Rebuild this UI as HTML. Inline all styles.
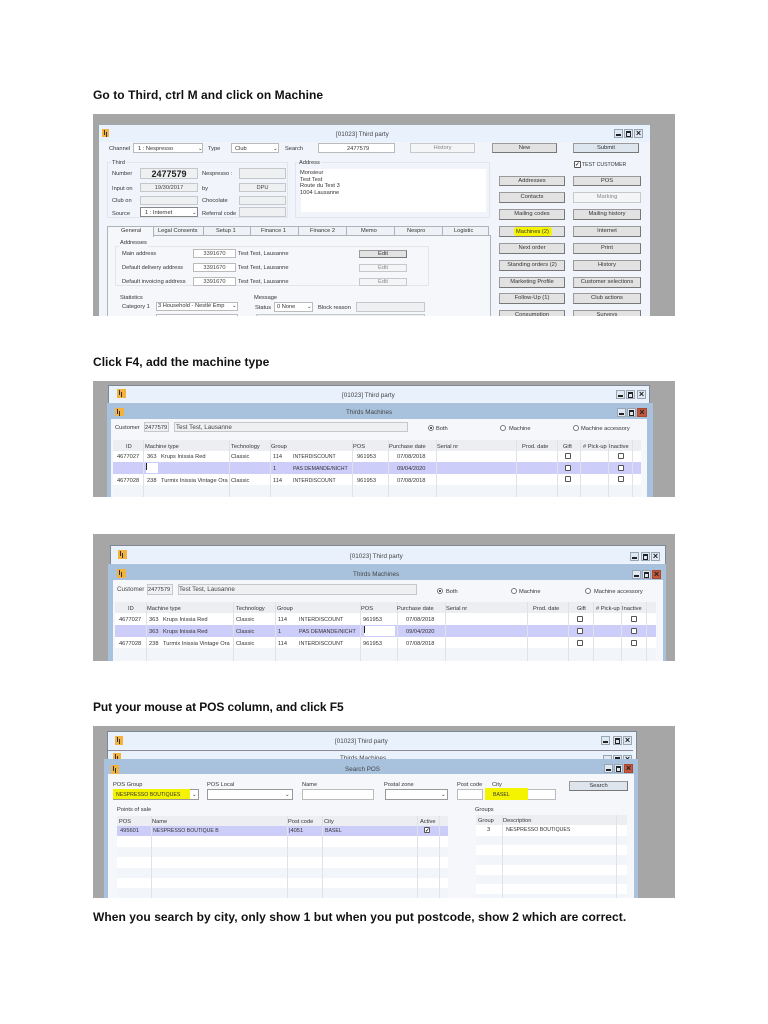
<!DOCTYPE html>
<html><head><meta charset="utf-8"><title>Third party</title>
<style>
html,body{margin:0;padding:0;background:#fff}
body{position:relative;width:768px;height:1024px;overflow:hidden;font-family:"Liberation Sans",sans-serif}
.h{position:absolute;left:93px;font-size:12px;line-height:16px;font-weight:bold;color:#111;white-space:nowrap}
.s{position:absolute;left:93px;width:582px;background:#a6a6a6;overflow:hidden;filter:blur(.35px)}
.s div{position:absolute;box-sizing:border-box}
.w{background:#f1f5fb;border:1px solid #7d8894}
.tb{background:#e9f1fc}
.bl{background:#a8c2de}
.c{background:#f5f7fa}
.t{font-size:5.7px;line-height:8px;color:#333;white-space:nowrap;margin-top:1px}
.cp{font-size:5.2px}
.tt{font-size:6.3px;line-height:8px;color:#444;white-space:nowrap;margin-top:1px}
.i{background:#fff;border:1px solid #bbb}
.g{background:#eef0f2;border:1px solid #c4c8cc}
.btn{background:#e2e2e2;border:1px solid #9a9a9a;border-right-color:#777;border-bottom-color:#777;font-size:5.8px;line-height:9px;color:#333;text-align:center;white-space:nowrap}
.lt{background:#f4f5f6;border-color:#c6c8ca;color:#888}
.fs{border:1px solid #e2e5e9}
.ic{background:#f4b23e;width:7px;height:8px}
.ic:after{content:"";position:absolute;left:2px;top:1px;width:1px;height:5px;background:#333;box-shadow:2px 2px 0 #333}
.wb{background:#dfe8f3;border:1px solid #9aa5b2;width:9px;height:9px}
.wb:after{content:"";position:absolute;background:#222}
.mn:after{left:1px;top:4px;width:5px;height:2px}
.mx:after{left:1px;top:1px;width:3px;height:3px;background:transparent;border:1px solid #222;border-top-width:2px}
.cl{color:#222;font-size:9px;line-height:7px;font-weight:bold;text-align:center}
.cl:after{display:none}
.rd{background:#c2573c;border-color:#a9482f}
.r{width:6px;height:6px;border:1px solid #777;border-radius:50%;background:#fff}
.r.on:after{content:"";position:absolute;left:1px;top:1px;width:2px;height:2px;border-radius:50%;background:#222}
.cb{width:6px;height:6px;border:1px solid #555;background:#fff;border-radius:1px}
.hd{background:#eceef1}
.wr{background:#fff}
.al{background:#f2f6fb}
.pu{background:#cdcdfa}
.v{width:1px;background:#dfe2e6}
.y{background:#f4f400}
.val{font:5.7px/8px 'Liberation Sans',sans-serif;color:#444;text-align:center;padding-top:1px}
</style></head><body>

<div class="h" style="top:87px;letter-spacing:.07px">Go to Third, ctrl M and click on Machine</div>

<div class="s" style="top:114px;height:202px">
<div class="w" style="left:5px;top:10px;width:552px;height:200px;border:0;border-left:1px solid #9aa;border-top:1px solid #9aa"></div>
<div class="tb" style="left:6px;top:11px;width:551px;height:17px"></div>
<div class="ic" style="left:9px;top:15px"></div>
<div class="tt" style="left:243px;top:16px">[01023] Third party</div>
<div class="wb mn" style="left:521px;top:15px"></div><div class="wb mx" style="left:531px;top:15px"></div><div class="wb cl" style="left:541px;top:15px">×</div>
<div class="t" style="left:16px;top:30px">Channel</div><div class="i" style="left:40px;top:29px;width:70px;height:10px"></div><div class="t" style="left:45px;top:30px">1 : Nespresso</div><div class="t" style="left:105px;top:30px">⌄</div>
<div class="t" style="left:115px;top:30px">Type</div><div class="i" style="left:138px;top:29px;width:48px;height:10px"></div><div class="t" style="left:142px;top:30px">Club</div><div class="t" style="left:180px;top:30px">⌄</div>
<div class="t" style="left:192px;top:30px">Search</div><div class="i" style="left:225px;top:29px;width:77px;height:10px"></div><div class="t" style="left:254px;top:30px">2477579</div>
<div class="btn lt" style="left:317px;top:29px;width:65px;height:10px">History</div>
<div class="btn" style="left:399px;top:29px;width:65px;height:10px">New</div>
<div class="btn" style="left:480px;top:29px;width:66px;height:10px;background:#dde5ee">Submit</div>
<div class="cb" style="left:481px;top:47px;width:7px;height:7px"></div><div class="t" style="left:482px;top:46px;font-weight:bold">✓</div><div class="t cp" style="left:489px;top:46px">TEST CUSTOMER</div>

<div class="btn" style="left:406px;top:62px;width:66px;height:10px">Addresses</div><div class="btn" style="left:480px;top:62px;width:68px;height:10px">POS</div>
<div class="btn" style="left:406px;top:78px;width:66px;height:11px">Contacts</div><div class="btn lt" style="left:480px;top:78px;width:68px;height:11px">Marking</div>
<div class="btn" style="left:406px;top:95px;width:66px;height:11px">Mailing codes</div><div class="btn" style="left:480px;top:95px;width:68px;height:11px">Mailing history</div>
<div class="btn" style="left:406px;top:112px;width:66px;height:11px"></div><div class="y" style="left:421px;top:113px;width:38px;height:9px;border-radius:3px"></div><div class="t" style="left:423px;top:113px">Machines (2)</div><div class="btn" style="left:480px;top:112px;width:68px;height:11px">Internet</div>
<div class="btn" style="left:406px;top:129px;width:66px;height:11px">Next order</div><div class="btn" style="left:480px;top:129px;width:68px;height:11px">Print</div>
<div class="btn" style="left:406px;top:146px;width:66px;height:11px">Standing orders (2)</div><div class="btn" style="left:480px;top:146px;width:68px;height:11px">History</div>
<div class="btn" style="left:406px;top:163px;width:66px;height:11px">Marketing Profile</div><div class="btn" style="left:480px;top:163px;width:68px;height:11px">Customer selections</div>
<div class="btn" style="left:406px;top:179px;width:66px;height:11px">Follow-Up (1)</div><div class="btn" style="left:480px;top:179px;width:68px;height:11px">Club actions</div>
<div class="btn" style="left:406px;top:196px;width:66px;height:11px">Consumption</div><div class="btn" style="left:480px;top:196px;width:68px;height:11px">Surveys</div>

<div class="fs" style="left:14px;top:48px;width:181px;height:56px"></div>
<div class="t" style="left:18px;top:44px;background:#f1f5fb;padding:0 1px">Third</div>
<div class="t" style="left:19px;top:55px">Number</div><div class="g" style="left:47px;top:54px;width:58px;height:11px;text-align:center;font:bold 9px/10px 'Liberation Sans',sans-serif;color:#222">2477579</div>
<div class="t" style="left:109px;top:55px">Nespresso :</div><div class="g" style="left:146px;top:54px;width:47px;height:11px"></div>
<div class="t" style="left:19px;top:70px">Input on</div><div class="g val" style="left:47px;top:69px;width:58px;height:9px;padding-top:0">19/30/2017</div>
<div class="t" style="left:109px;top:70px">by</div><div class="g val" style="left:146px;top:69px;width:47px;height:9px;padding-top:0">DPU</div>
<div class="t" style="left:19px;top:82px">Club on</div><div class="g" style="left:47px;top:82px;width:58px;height:9px"></div>
<div class="t" style="left:109px;top:82px">Chocolate</div><div class="g" style="left:146px;top:82px;width:47px;height:9px"></div>
<div class="t" style="left:19px;top:95px">Source</div><div class="i" style="left:47px;top:93px;width:58px;height:10px;border-color:#888"></div><div class="t" style="left:52px;top:94px">1 : Internet</div><div class="t" style="left:99px;top:94px">⌄</div>
<div class="t" style="left:109px;top:95px">Referral code</div><div class="g" style="left:146px;top:93px;width:47px;height:10px"></div>

<div class="fs" style="left:202px;top:48px;width:195px;height:56px"></div>
<div class="t" style="left:205px;top:44px;background:#f1f5fb;padding:0 1px">Address</div>
<div style="left:208px;top:55px;width:185px;height:43px;background:#fff"></div>
<div class="t" style="left:207px;top:55px;line-height:6.7px;background:transparent">Monsieur<br>Test Test<br>Route du Test 3<br>1004 Lausanne</div>

<div style="left:14px;top:121px;width:384px;height:90px;border:1px solid #aeb4ba;background:#f5f7fa"></div>
<div style="left:14px;top:112px;width:382px;height:10px;background:#eef1f5;border:1px solid #aeb4ba"></div>
<div style="left:14px;top:112px;width:47px;height:11px;background:#f5f7fa;border:1px solid #aeb4ba;border-bottom:0"></div>
<div class="v" style="left:110px;top:112px;height:9px;background:#aeb4ba"></div><div class="v" style="left:157px;top:112px;height:9px;background:#aeb4ba"></div><div class="v" style="left:205px;top:112px;height:9px;background:#aeb4ba"></div><div class="v" style="left:253px;top:112px;height:9px;background:#aeb4ba"></div><div class="v" style="left:301px;top:112px;height:9px;background:#aeb4ba"></div><div class="v" style="left:349px;top:112px;height:9px;background:#aeb4ba"></div>
<div class="t" style="left:28px;top:112px">General</div><div class="t" style="left:65px;top:112px">Legal Consents</div><div class="t" style="left:123px;top:112px">Setup 1</div><div class="t" style="left:168px;top:112px">Finance 1</div><div class="t" style="left:217px;top:112px">Finance 2</div><div class="t" style="left:268px;top:112px">Memo</div><div class="t" style="left:314px;top:112px">Nespro</div><div class="t" style="left:361px;top:112px">Logistic</div>

<div class="fs" style="left:22px;top:132px;width:314px;height:40px"></div>
<div class="t" style="left:26px;top:124px;background:#f5f7fa;padding:0 1px">Addresses</div>
<div class="t" style="left:29px;top:135px">Main address</div><div class="i val" style="left:100px;top:135px;width:43px;height:9px;padding-top:0">3391670</div><div class="t" style="left:145px;top:135px">Test Test, Lausanne</div><div class="btn" style="left:266px;top:136px;width:48px;height:8px;line-height:6px">Edit</div>
<div class="t" style="left:29px;top:149px">Default delivery address</div><div class="i val" style="left:100px;top:149px;width:43px;height:9px;padding-top:0">3391670</div><div class="t" style="left:145px;top:149px">Test Test, Lausanne</div><div class="btn lt" style="left:266px;top:150px;width:48px;height:8px;line-height:6px">Edit</div>
<div class="t" style="left:29px;top:163px">Default invoicing address</div><div class="i val" style="left:100px;top:163px;width:43px;height:9px;padding-top:0">3391670</div><div class="t" style="left:145px;top:163px">Test Test, Lausanne</div><div class="btn lt" style="left:266px;top:164px;width:48px;height:8px;line-height:6px">Edit</div>

<div class="t" style="left:27px;top:179px">Statistics</div><div class="t" style="left:29px;top:188px">Category 1</div><div class="i" style="left:63px;top:188px;width:82px;height:9px"></div><div class="t" style="left:65px;top:187px">3 Household - Nestlé Emp</div><div class="t" style="left:139px;top:187px">⌄</div><div class="i" style="left:63px;top:200px;width:82px;height:9px"></div>
<div class="t" style="left:161px;top:179px">Message</div><div class="t" style="left:162px;top:189px">Status</div><div class="i" style="left:181px;top:188px;width:39px;height:10px"></div><div class="t" style="left:184px;top:188px">0 None</div><div class="t" style="left:214px;top:188px">⌄</div><div class="t" style="left:225px;top:189px">Block reason</div><div class="g" style="left:263px;top:188px;width:69px;height:10px"></div><div class="g" style="left:163px;top:200px;width:169px;height:9px"></div>
</div>

<div class="h" style="top:354px;letter-spacing:.03px">Click F4, add the machine type</div>

<div class="s" style="top:381px;height:116px">
<div class="w" style="left:15px;top:4px;width:542px;height:30px"></div><div class="tb" style="left:16px;top:5px;width:540px;height:16px"></div>
<div class="ic" style="left:24px;top:8px;width:9px;height:9px"></div>
<div class="tt" style="left:249px;top:10px">[01023] Third party</div>
<div class="wb mn" style="left:523px;top:9px"></div><div class="wb mx" style="left:533px;top:9px"></div><div class="wb cl" style="left:544px;top:9px">×</div>
<div class="bl" style="left:14px;top:22px;width:546px;height:94px"></div>
<div class="ic" style="left:22px;top:27px;width:9px;height:8px"></div>
<div class="tt" style="left:253px;top:27px">Thirds Machines</div>
<div class="wb mn" style="left:524px;top:27px"></div><div class="wb mx" style="left:534px;top:27px"></div><div class="wb cl rd" style="left:544px;top:27px;width:10px">×</div>
<div class="c" style="left:18px;top:38px;width:536px;height:78px"></div>
<div class="t" style="left:22px;top:42px">Customer</div><div class="g" style="left:51px;top:41px;width:25px;height:10px"></div><div class="t" style="left:52px;top:42px">2477579</div><div class="g" style="left:81px;top:41px;width:234px;height:10px"></div><div class="tt" style="left:83px;top:42px">Test Test, Lausanne</div>
<div class="r on" style="left:335px;top:44px"></div><div class="t" style="left:343px;top:43px">Both</div>
<div class="r" style="left:407px;top:44px"></div><div class="t" style="left:416px;top:43px">Machine</div>
<div class="r" style="left:480px;top:44px"></div><div class="t" style="left:488px;top:43px">Machine accessory</div>
<div class="hd" style="left:20px;top:59px;width:528px;height:11px"></div>
<div class="wr" style="left:20px;top:70px;width:528px;height:11px"></div>
<div class="pu" style="left:20px;top:81px;width:528px;height:12px"></div>
<div class="wr" style="left:20px;top:93px;width:528px;height:11px"></div>
<div class="al" style="left:20px;top:104px;width:528px;height:12px"></div>
<div class="v" style="left:50px;top:59px;height:57px"></div><div class="v" style="left:136px;top:59px;height:57px"></div><div class="v" style="left:177px;top:59px;height:57px"></div><div class="v" style="left:259px;top:59px;height:57px"></div><div class="v" style="left:295px;top:59px;height:57px"></div><div class="v" style="left:343px;top:59px;height:57px"></div><div class="v" style="left:423px;top:59px;height:57px"></div><div class="v" style="left:464px;top:59px;height:57px"></div><div class="v" style="left:487px;top:59px;height:57px"></div><div class="v" style="left:515px;top:59px;height:57px"></div><div class="v" style="left:539px;top:59px;height:57px"></div>
<div class="t" style="left:33px;top:61px">ID</div><div class="t" style="left:52px;top:61px">Machine type</div><div class="t" style="left:138px;top:61px">Technology</div><div class="t" style="left:178px;top:61px">Group</div><div class="t" style="left:260px;top:61px">POS</div><div class="t" style="left:296px;top:61px">Purchase date</div><div class="t" style="left:344px;top:61px">Serial nr</div><div class="t" style="left:429px;top:61px">Prod. date</div><div class="t" style="left:470px;top:61px">Gift</div><div class="t" style="left:490px;top:61px"># Pick-up</div><div class="t" style="left:516px;top:61px">Inactive</div>
<div class="t" style="left:24px;top:71px">4677027</div><div class="t" style="left:54px;top:71px">363</div><div class="t" style="left:68px;top:71px">Krups Inissia Red</div><div class="t" style="left:138px;top:71px">Classic</div><div class="t" style="left:180px;top:71px">114</div><div class="t cp" style="left:200px;top:71px">INTERDISCOUNT</div><div class="t" style="left:264px;top:71px">961953</div><div class="t" style="left:304px;top:71px">07/08/2018</div><div class="cb" style="left:472px;top:72px"></div><div class="cb" style="left:525px;top:72px"></div>
<div style="left:53px;top:82px;width:12px;height:10px;background:#fff"></div><div style="left:53px;top:82px;width:1px;height:7px;background:#222"></div><div class="t" style="left:180px;top:83px">1</div><div class="t cp" style="left:200px;top:83px">PAS DEMANDE/NICHT</div><div class="t" style="left:304px;top:83px">09/04/2020</div><div class="cb" style="left:472px;top:84px"></div><div class="cb" style="left:525px;top:84px"></div>
<div class="t" style="left:24px;top:95px">4677028</div><div class="t" style="left:54px;top:95px">238</div><div class="t" style="left:68px;top:95px">Turmix Inissia Vintage Ora</div><div class="t" style="left:138px;top:95px">Classic</div><div class="t" style="left:180px;top:95px">114</div><div class="t cp" style="left:200px;top:95px">INTERDISCOUNT</div><div class="t" style="left:264px;top:95px">961953</div><div class="t" style="left:304px;top:95px">07/08/2018</div><div class="cb" style="left:472px;top:95px"></div><div class="cb" style="left:525px;top:95px"></div>
</div>

<div class="s" style="top:534px;height:127px">
<div class="w" style="left:17px;top:11px;width:556px;height:30px"></div><div class="tb" style="left:18px;top:12px;width:554px;height:17px"></div>
<div class="ic" style="left:25px;top:16px;width:9px;height:9px"></div>
<div class="tt" style="left:257px;top:18px">[01023] Third party</div>
<div class="wb mn" style="left:537px;top:18px"></div><div class="wb mx" style="left:548px;top:18px"></div><div class="wb cl" style="left:558px;top:18px">×</div>
<div class="bl" style="left:15px;top:30px;width:558px;height:97px"></div>
<div class="ic" style="left:24px;top:35px;width:9px;height:9px"></div>
<div class="tt" style="left:260px;top:36px">Thirds Machines</div>
<div class="wb mn" style="left:539px;top:36px"></div><div class="wb mx" style="left:549px;top:36px"></div><div class="wb cl rd" style="left:559px;top:36px">×</div>
<div class="c" style="left:20px;top:46px;width:550px;height:81px"></div>
<div class="tt" style="left:24px;top:51px">Customer</div><div class="g" style="left:54px;top:50px;width:26px;height:11px"></div><div class="t" style="left:55px;top:51px">2477579</div><div class="g" style="left:85px;top:50px;width:239px;height:11px"></div><div class="tt" style="left:86px;top:51px">Test Test, Lausanne</div>
<div class="r on" style="left:344px;top:54px"></div><div class="t" style="left:353px;top:53px">Both</div>
<div class="r" style="left:418px;top:54px"></div><div class="t" style="left:426px;top:53px">Machine</div>
<div class="r" style="left:492px;top:54px"></div><div class="t" style="left:501px;top:53px">Machine accessory</div>
<div class="hd" style="left:22px;top:68px;width:541px;height:11px"></div>
<div class="wr" style="left:22px;top:79px;width:541px;height:12px"></div>
<div class="pu" style="left:22px;top:91px;width:541px;height:12px"></div>
<div class="wr" style="left:22px;top:103px;width:541px;height:11px"></div>
<div class="al" style="left:22px;top:114px;width:541px;height:13px"></div>
<div class="v" style="left:53px;top:68px;height:59px"></div><div class="v" style="left:140px;top:68px;height:59px"></div><div class="v" style="left:182px;top:68px;height:59px"></div><div class="v" style="left:267px;top:68px;height:59px"></div><div class="v" style="left:304px;top:68px;height:59px"></div><div class="v" style="left:352px;top:68px;height:59px"></div><div class="v" style="left:434px;top:68px;height:59px"></div><div class="v" style="left:475px;top:68px;height:59px"></div><div class="v" style="left:500px;top:68px;height:59px"></div><div class="v" style="left:528px;top:68px;height:59px"></div><div class="v" style="left:553px;top:68px;height:59px"></div>
<div class="t" style="left:35px;top:70px">ID</div><div class="t" style="left:54px;top:70px">Machine type</div><div class="t" style="left:143px;top:70px">Technology</div><div class="t" style="left:184px;top:70px">Group</div><div class="t" style="left:268px;top:70px">POS</div><div class="t" style="left:304px;top:70px">Purchase date</div><div class="t" style="left:353px;top:70px">Serial nr</div><div class="t" style="left:440px;top:70px">Prod. date</div><div class="t" style="left:484px;top:70px">Gift</div><div class="t" style="left:503px;top:70px"># Pick-up</div><div class="t" style="left:529px;top:70px">Inactive</div>
<div class="t" style="left:26px;top:81px">4677027</div><div class="t" style="left:56px;top:81px">363</div><div class="t" style="left:70px;top:81px">Krups Inissia Red</div><div class="t" style="left:143px;top:81px">Classic</div><div class="t" style="left:185px;top:81px">114</div><div class="t cp" style="left:206px;top:81px;font-size:5.4px">INTERDISCOUNT</div><div class="t" style="left:270px;top:81px">961953</div><div class="t" style="left:313px;top:81px">07/08/2018</div><div class="cb" style="left:484px;top:82px"></div><div class="cb" style="left:538px;top:82px"></div>
<div class="t" style="left:56px;top:93px">363</div><div class="t" style="left:70px;top:93px">Krups Inissia Red</div><div class="t" style="left:143px;top:93px">Classic</div><div class="t" style="left:185px;top:93px">1</div><div class="t cp" style="left:206px;top:93px;font-size:5.4px">PAS DEMANDE/NICHT</div><div style="left:271px;top:92px;width:31px;height:10px;background:#fff"></div><div style="left:271px;top:92px;width:1px;height:7px;background:#222"></div><div class="t" style="left:313px;top:93px">09/04/2020</div><div class="cb" style="left:484px;top:94px"></div><div class="cb" style="left:538px;top:94px"></div>
<div class="t" style="left:26px;top:105px">4677028</div><div class="t" style="left:56px;top:105px">238</div><div class="t" style="left:70px;top:105px">Turmix Inissia Vintage Ora</div><div class="t" style="left:143px;top:105px">Classic</div><div class="t" style="left:185px;top:105px">114</div><div class="t cp" style="left:206px;top:105px;font-size:5.4px">INTERDISCOUNT</div><div class="t" style="left:270px;top:105px">961953</div><div class="t" style="left:313px;top:105px">07/08/2018</div><div class="cb" style="left:484px;top:106px"></div><div class="cb" style="left:538px;top:106px"></div>
</div>

<div class="h" style="top:699px;letter-spacing:-.1px">Put your mouse at POS column, and click F5</div>

<div class="s" style="top:726px;height:172px">
<div class="w" style="left:14px;top:5px;width:530px;height:30px"></div><div class="tb" style="left:15px;top:6px;width:528px;height:17px"></div>
<div class="ic" style="left:22px;top:10px;width:8px;height:9px"></div>
<div class="tt" style="left:242px;top:11px">[01023] Third party</div>
<div class="wb mn" style="left:508px;top:10px"></div><div class="wb mx" style="left:520px;top:10px"></div><div class="wb cl" style="left:530px;top:10px">×</div>
<div class="tb" style="left:15px;top:24px;width:525px;height:10px;border-top:1px solid #889"></div>
<div class="ic" style="left:20px;top:27px;width:8px;height:6px"></div>
<div class="tt" style="left:247px;top:28px">Thirds Machines</div>
<div class="wb mn" style="left:510px;top:29px;height:5px;overflow:hidden"></div><div class="wb mx" style="left:520px;top:29px;height:5px;overflow:hidden"></div><div class="wb cl" style="left:530px;top:29px;height:5px;overflow:hidden">×</div>
<div class="bl" style="left:11px;top:33px;width:534px;height:139px"></div>
<div class="ic" style="left:18px;top:39px;width:8px;height:9px"></div>
<div class="tt" style="left:252px;top:39px">Search POS</div>
<div class="wb mn" style="left:511px;top:38px"></div><div class="wb mx" style="left:521px;top:38px"></div><div class="wb cl rd" style="left:531px;top:38px">×</div>
<div class="c" style="left:15px;top:48px;width:526px;height:124px"></div>
<div class="t" style="left:20px;top:54px">POS Group</div><div class="t" style="left:114px;top:54px">POS Local</div><div class="t" style="left:209px;top:54px">Name</div><div class="t" style="left:291px;top:54px">Postal zone</div><div class="t" style="left:364px;top:54px">Post code</div><div class="t" style="left:399px;top:54px">City</div>
<div class="i" style="left:20px;top:63px;width:86px;height:11px;border-color:#999"></div><div class="y" style="left:20px;top:63px;width:77px;height:10px"></div><div class="t cp" style="left:23px;top:64px">NESPRESSO BOUTIQUES</div><div class="t" style="left:99px;top:64px">⌄</div>
<div class="i" style="left:114px;top:63px;width:86px;height:11px;border-color:#999"></div><div class="t" style="left:192px;top:64px">⌄</div>
<div class="i" style="left:209px;top:63px;width:72px;height:11px"></div>
<div class="i" style="left:292px;top:63px;width:63px;height:11px;border-color:#999"></div><div class="t" style="left:348px;top:64px">⌄</div>
<div class="i" style="left:364px;top:63px;width:26px;height:11px"></div>
<div class="i" style="left:392px;top:63px;width:71px;height:11px"></div><div class="y" style="left:392px;top:62px;width:43px;height:12px"></div><div class="t cp" style="left:400px;top:64px">BASEL</div>
<div class="btn" style="left:476px;top:55px;width:59px;height:10px;background:#dde4ec">Search</div>
<div class="t" style="left:24px;top:79px">Points of sale</div>
<div class="t" style="left:382px;top:79px">Groups</div>
<div class="hd" style="left:24px;top:90px;width:331px;height:10px"></div>
<div class="pu" style="left:24px;top:100px;width:331px;height:10px"></div>
<div class="wr" style="left:24px;top:110px;width:331px;height:11px"></div><div class="al" style="left:24px;top:121px;width:331px;height:10px"></div><div class="wr" style="left:24px;top:131px;width:331px;height:11px"></div><div class="al" style="left:24px;top:142px;width:331px;height:10px"></div><div class="wr" style="left:24px;top:152px;width:331px;height:10px"></div><div class="al" style="left:24px;top:162px;width:331px;height:10px"></div>
<div class="v" style="left:58px;top:90px;height:82px"></div><div class="v" style="left:194px;top:90px;height:82px"></div><div class="v" style="left:229px;top:90px;height:82px"></div><div class="v" style="left:324px;top:90px;height:82px"></div><div class="v" style="left:346px;top:90px;height:82px"></div>
<div class="t" style="left:26px;top:91px">POS</div><div class="t" style="left:59px;top:91px">Name</div><div class="t" style="left:195px;top:91px">Post code</div><div class="t" style="left:231px;top:91px">City</div><div class="t" style="left:327px;top:91px">Active</div>
<div class="t" style="left:27px;top:100px">495601</div><div class="t cp" style="left:60px;top:100px">NESPRESSO BOUTIQUE B</div><div class="t" style="left:196px;top:100px">|4051</div><div class="t cp" style="left:232px;top:100px">BASEL</div><div class="cb" style="left:331px;top:101px"></div><div class="t" style="left:332px;top:100px;font-weight:bold">✓</div>
<div class="hd" style="left:383px;top:89px;width:151px;height:10px"></div>
<div class="wr" style="left:383px;top:99px;width:151px;height:11px"></div><div class="al" style="left:383px;top:110px;width:151px;height:9px"></div><div class="wr" style="left:383px;top:119px;width:151px;height:10px"></div><div class="al" style="left:383px;top:129px;width:151px;height:10px"></div><div class="wr" style="left:383px;top:139px;width:151px;height:10px"></div><div class="al" style="left:383px;top:149px;width:151px;height:9px"></div><div class="wr" style="left:383px;top:158px;width:151px;height:10px"></div><div class="al" style="left:383px;top:168px;width:151px;height:4px"></div>
<div class="v" style="left:409px;top:89px;height:83px"></div><div class="v" style="left:523px;top:89px;height:83px"></div>
<div class="t" style="left:385px;top:90px">Group</div><div class="t" style="left:410px;top:90px">Description</div>
<div class="t" style="left:394px;top:99px">3</div><div class="t cp" style="left:413px;top:99px">NESPRESSO BOUTIQUES</div>
</div>

<div class="h" style="top:909px;letter-spacing:.06px">When you search by city, only show 1 but when you put postcode, show 2 which are correct.</div>
</body></html>
